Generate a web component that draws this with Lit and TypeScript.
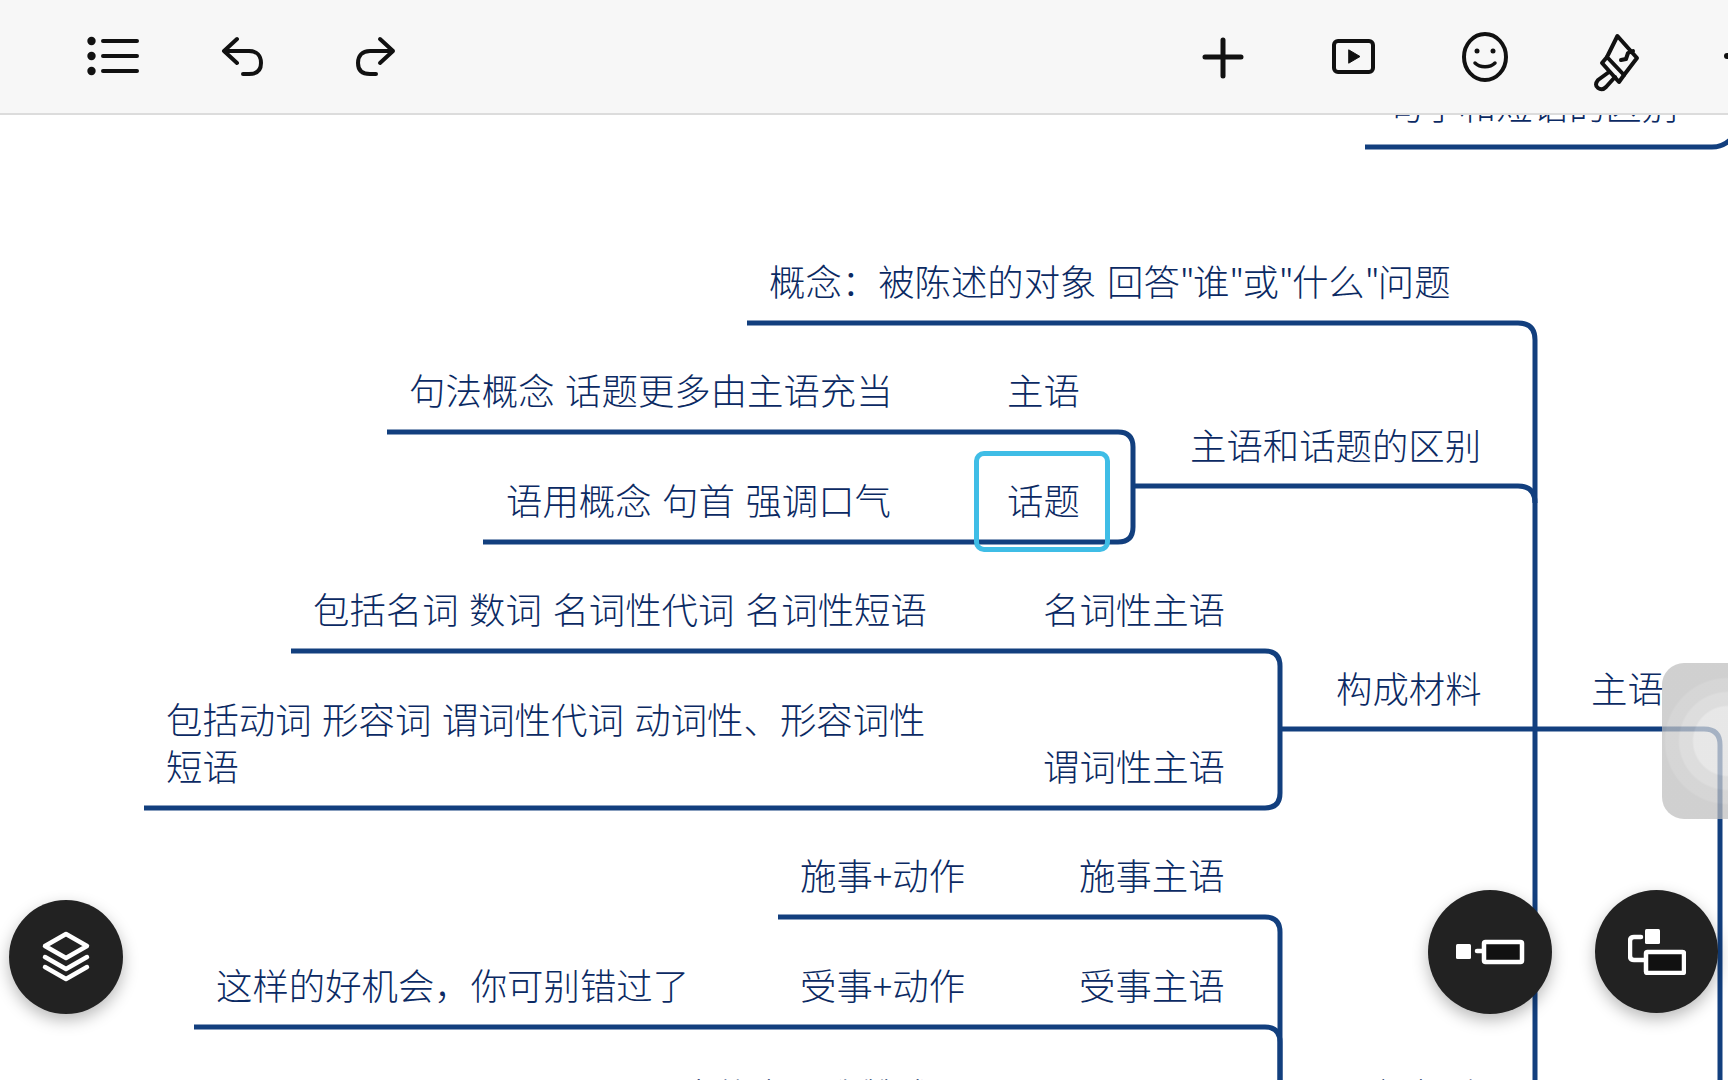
import { LitElement, html, css, svg } from "lit";
import { customElement } from "lit/decorators.js";

type Label = { x: number; y: number; t: string };

// Text of the mind map: position is the content of this free canvas.
const LABELS: Label[] = [
  { x: 1387, y: 104, t: "句子和短语的区别" },
  { x: 769, y: 280, t: "概念：被陈述的对象 回答\"谁\"或\"什么\"问题" },
  { x: 409, y: 389, t: "句法概念 话题更多由主语充当" },
  { x: 1007, y: 389, t: "主语" },
  { x: 1190, y: 444, t: "主语和话题的区别" },
  { x: 506, y: 499, t: "语用概念 句首 强调口气" },
  { x: 1007, y: 499, t: "话题" },
  { x: 313, y: 608, t: "包括名词 数词 名词性代词 名词性短语" },
  { x: 1043, y: 608, t: "名词性主语" },
  { x: 1336, y: 687, t: "构成材料" },
  { x: 1591, y: 687, t: "主语" },
  { x: 166, y: 718, t: "包括动词 形容词 谓词性代词 动词性、形容词性" },
  { x: 166, y: 765, t: "短语" },
  { x: 1043, y: 765, t: "谓词性主语" },
  { x: 800, y: 874, t: "施事+动作" },
  { x: 1079, y: 874, t: "施事主语" },
  { x: 216, y: 984, t: "这样的好机会，你可别错过了" },
  { x: 800, y: 984, t: "受事+动作" },
  { x: 1079, y: 984, t: "受事主语" },
  { x: 678, y: 1094, t: "这件事，我赞成" },
  { x: 1330, y: 1094, t: "语义类型" },
];

const LINES = [
  "M1365 147H1712Q1724 147 1732 138",
  "M747 323H1518Q1535 323 1535 340V1090",
  "M387 432H1118Q1133 432 1133 447V527Q1133 542 1118 542H483",
  "M1133 486H1518Q1535 486 1535 503",
  "M291 651H1265Q1280 651 1280 666V793Q1280 808 1265 808H144",
  "M1280 729H1704Q1720 729 1720 745V1090",
  "M778 917H1265Q1280 917 1280 932V1090",
  "M194 1027H1265Q1280 1027 1280 1042V1090",
];

@customElement("app-root")
export class AppRoot extends LitElement {
  static styles = css`
    :host { display: block; width: 1728px; height: 1080px; overflow: hidden; position: relative; background: #fff; font-family: "Noto Sans CJK SC", "Noto Sans", sans-serif; }
    .canvas { position: absolute; inset: 0; }
    .lines { position: absolute; inset: 0; width: 1728px; height: 1080px; }
    .label { position: absolute; font-size: 36.4px; font-weight: 300; line-height: 1; color: #0b2a63; white-space: nowrap; word-spacing: 2.5px; transform: translateY(-50%); }
    .q { letter-spacing: -2px; }
    .sel { position: absolute; left: 974px; top: 451px; width: 136px; height: 101px; box-sizing: border-box; border: 5px solid #3fbde6; border-radius: 10px; }
    .bar { position: absolute; left: 0; top: 0; right: 0; height: 115px; box-sizing: border-box; background: #f7f7f7; border-bottom: 2px solid #dcdcdc; }
    .bar svg { position: absolute; fill: none; stroke: #111; stroke-width: 4; stroke-linecap: round; stroke-linejoin: round; }
    .fab { position: absolute; border-radius: 50%; background: #222; box-shadow: 0 6px 16px rgba(0,0,0,.28); display: flex; align-items: center; justify-content: center; }
    .fab svg { fill: none; stroke: #fff; stroke-width: 4.5; stroke-linejoin: round; stroke-linecap: round; }
    .handle { position: absolute; left: 1662px; top: 663px; width: 90px; height: 156px; border-radius: 22px; background: radial-gradient(circle at 66px 78px, rgba(222,222,222,.72) 0 34px, rgba(208,208,208,.72) 36px 48px, rgba(198,198,198,.72) 50px 62px, rgba(190,190,190,.72) 64px); }
  `;

  private text(t: string) {
    const parts = t.split('"');
    return parts.map((p, i) => (i === 0 ? p : html`<span class="q">"</span>${p}`));
  }

  render() {
    return html`
      <div class="canvas">
        ${LABELS.map(l => html`<div class="label" style="left:${l.x}px;top:${l.y}px">${this.text(l.t)}</div>`)}
        <svg class="lines" viewBox="0 0 1728 1080" fill="none" stroke="#123f7e" stroke-width="5">
          ${LINES.map(d => svg`<path d=${d}></path>`)}
        </svg>
        <div class="sel"></div>
      </div>
      <div class="handle"></div>
      <div class="bar">
        <svg style="left:85px;top:35px" width="56" height="42" viewBox="0 0 56 42">
          <circle cx="6.500" cy="6" r="2.2" fill="#111"/><circle cx="6.500" cy="21" r="2.2" fill="#111"/><circle cx="6.500" cy="36" r="2.2" fill="#111"/>
          <path d="M18 6H52M18 21H52M18 36H52"/>
        </svg>
        <svg style="left:221px;top:35px" width="46" height="44" viewBox="0 0 46 44">
          <path d="M16 4 3 16 16 28M3 16H28C36 16 40 21 40 28S36 39 28 39H22"/>
        </svg>
        <svg style="left:352px;top:35px" width="46" height="44" viewBox="0 0 46 44">
          <path d="M28 4 41 16 28 28M41 16H18C10 16 6 21 6 28S10 39 18 39H24"/>
        </svg>
        <svg style="left:1202px;top:36px" width="42" height="44" viewBox="0 0 42 44">
          <path d="M21 4V40M3 21H39" stroke-width="5"/>
        </svg>
        <svg style="left:1331px;top:36px" width="46" height="40" viewBox="0 0 46 40">
          <rect x="3" y="5" width="39" height="31" rx="4"/><path d="M18 14 29 20.500 18 27Z" fill="#111" stroke-width="1"/>
        </svg>
        <svg style="left:1460px;top:32px" width="50" height="50" viewBox="0 0 50 50">
          <ellipse cx="25" cy="25" rx="21" ry="23"/>
          <circle cx="17" cy="19" r="2.5" fill="#111" stroke="none"/><circle cx="33" cy="19" r="2.500" fill="#111" stroke="none"/>
          <path d="M15 31C20 36 30 36 35 31" stroke-width="3.500"/>
        </svg>
        <svg style="left:1590px;top:30px" width="52" height="62" viewBox="0 0 52 62">
          <path d="M27.400 6 47 28 34 45 17 27Z"/>
          <path d="M43 21 38 23 36 29 31 30"/>
          <path d="M17 27 12 33 29 52 34 45"/>
          <path d="M19 42 8 50Q4 55 8 58 12 61 16 57L25 47"/>
        </svg>
        <svg style="left:1722px;top:50px" width="8" height="12" viewBox="0 0 8 12"><circle cx="5" cy="6" r="3" fill="#111" stroke="none"/></svg>
      </div>
      <div class="fab" style="left:9px;top:900px;width:114px;height:114px">
        <svg width="50" height="52" viewBox="0 0 50 52">
          <path d="M25 3 46 15 25 27 4 15Z"/>
          <path d="M4 26 25 38 46 26M4 36 25 48 46 36"/>
        </svg>
      </div>
      <div class="fab" style="left:1428px;top:890px;width:124px;height:124px">
        <svg width="70" height="26" viewBox="0 0 70 26">
          <rect x="1" y="5" width="15" height="15" rx="1.500" fill="#fff" stroke="none"/>
          <path d="M22 12H29"/><rect x="29" y="3" width="38" height="20" rx="1.500" fill="#111"/>
        </svg>
      </div>
      <div class="fab" style="left:1595px;top:890px;width:123px;height:123px">
        <svg width="58" height="46" viewBox="0 0 58 46">
          <rect x="17" y="0" width="15" height="15" rx="1.500" fill="#fff" stroke="none"/>
          <path d="M13 8H6Q2 8 2 12V27Q2 31 6 31H18"/><rect x="18" y="23" width="38" height="21" rx="1.500" fill="#111"/>
        </svg>
      </div>
    `;
  }
}
